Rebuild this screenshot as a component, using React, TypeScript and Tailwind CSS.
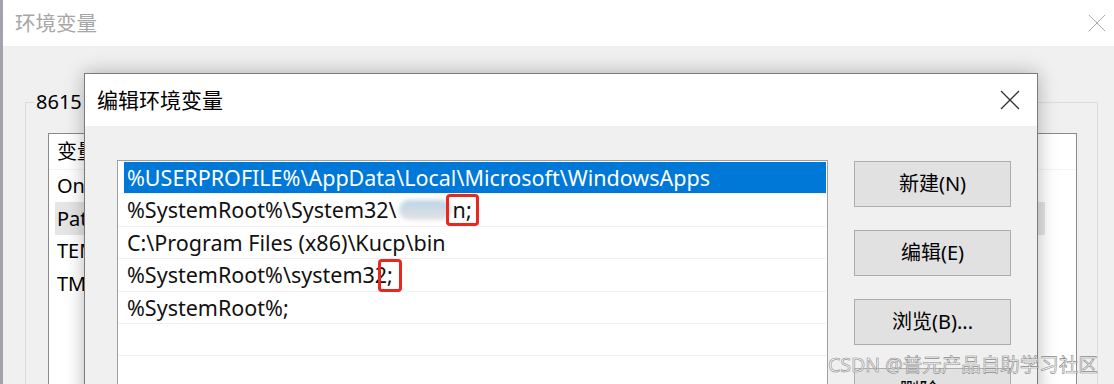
import React from "react";

function CloseX({ size, color, sw }: { size: number; color: string; sw: number }) {
  return (
    <svg width={size} height={size} viewBox="0 0 20 20" fill="none">
      <path d="M1 1 L19 19 M19 1 L1 19" stroke={color} strokeWidth={sw} />
    </svg>
  );
}

export default function App() {
  return (
    <div className="relative w-[1114px] h-[384px] overflow-hidden bg-[#f0f0f0] [font-family:'Noto_Sans','Noto_Sans_CJK_SC',sans-serif] text-black">
      {/* Outer window: 环境变量 */}
      <div className="flex h-full">
        <div className="w-[3px] bg-[#a3a3ad]" />
        <div className="flex-1 flex flex-col">
          <div className="h-[46px] shrink-0 bg-white flex items-center justify-between pl-[12px] pr-[8px]">
            <span className="text-[20.5px] leading-none text-[#a6a6a6]">环境变量</span>
            <CloseX size={18} color="#a8a8a8" sw={1.1} />
          </div>
          <div className="flex-1 flex flex-col pt-[56px] pl-[22px] pr-[16px]">
            <div className="relative flex-1 flex flex-col border-l border-t border-r border-[#dcdcdc] pt-[30px] pl-[22px] pr-[20px]">
              <span className="absolute -top-[14px] left-[8px] bg-[#f0f0f0] px-[2px] text-[20px] leading-[26px]">
                8615
              </span>
              <div className="flex-1 bg-white border-l border-t border-r border-[#8a8a8a] flex flex-col text-[20px] leading-none">
                <div className="h-[36px] shrink-0 flex items-center pl-[8px] border-b border-[#f4f4f4]">
                  <span>变量</span>
                </div>
                <div className="h-[32px] shrink-0 flex items-center pl-[8px]">On</div>
                <div className="h-[33px] shrink-0 flex items-center ml-[6px] pl-[2px] mr-[31px] bg-[#e5e5e5]">Path</div>
                <div className="h-[32px] shrink-0 flex items-center pl-[8px]">TEMP</div>
                <div className="h-[33px] shrink-0 flex items-center pl-[8px]">TMP</div>
              </div>
            </div>
          </div>
        </div>
      </div>

      {/* Front dialog: 编辑环境变量 */}
      <div className="absolute left-[84px] top-[73px] w-[954px] h-[380px] border border-[#7b7b7b] bg-[#f0f0f0] shadow-[0_0_18px_rgba(0,0,0,0.28)] flex flex-col">
        <div className="h-[52px] shrink-0 bg-white flex items-center justify-between pl-[12px] pr-[17px]">
          <span className="text-[21px] leading-none">编辑环境变量</span>
          <CloseX size={20} color="#333333" sw={1.3} />
        </div>
        <div className="flex-1 flex pl-[32px] pt-[34px] gap-[26px]">
          <div className="w-[711px] h-[280px] shrink-0 bg-white border border-[#a0a0a0] pt-[1px] pr-[1px] text-[21.5px] leading-none text-[#111]">
            <div className="h-[32.4px] flex border-b border-[#f0f0f0]">
              <div className="flex-1 ml-[6px] bg-[#0078d7] text-white flex items-center pl-[3px]">
                %USERPROFILE%\AppData\Local\Microsoft\WindowsApps
              </div>
            </div>
            <div className="h-[32.4px] flex items-center pl-[9px] border-b border-[#f0f0f0]">
              <span>%SystemRoot%\System32\</span>
              <span className="inline-block w-[52px] h-[20px] mx-[2px] rounded-full bg-[linear-gradient(180deg,#bcd3e6_0%,#d3dde6_60%,#e2e2e2_100%)] blur-[2px]" />
              <span className="relative">
                n;
                <span className="absolute -left-[7px] -right-[7px] -top-[5px] -bottom-[5px] border-[3px] border-[#e8281e] rounded-[4px]" />
              </span>
            </div>
            <div className="h-[32.4px] flex items-center pl-[9px] border-b border-[#f0f0f0]">
              C:\Program Files (x86)\Kucp\bin
            </div>
            <div className="h-[32.4px] flex items-center pl-[9px] border-b border-[#f0f0f0]">
              <span>%SystemRoot%\system3</span>
              <span className="relative">
                2;
                <span className="absolute left-[3px] -right-[9px] -top-[5px] -bottom-[6px] border-[3px] border-[#e8281e] rounded-[4px]" />
              </span>
            </div>
            <div className="h-[32.4px] flex items-center pl-[9px] border-b border-[#f0f0f0]">
              %SystemRoot%;
            </div>
            <div className="h-[32.4px] border-b border-[#f0f0f0]" />
          </div>
          <div className="flex flex-col gap-[23px] pt-[1px]">
            <div className="w-[157px] h-[46px] shrink-0 border border-[#adadad] bg-[#e1e1e1] flex items-center justify-center text-[20px] leading-none">
              新建(N)
            </div>
            <div className="w-[157px] h-[46px] shrink-0 border border-[#adadad] bg-[#e1e1e1] flex items-center justify-center text-[20px] leading-none">
              编辑(E)
            </div>
            <div className="w-[157px] h-[46px] shrink-0 border border-[#adadad] bg-[#e1e1e1] flex items-center justify-center text-[20px] leading-none">
              浏览(B)...
            </div>
            <div className="w-[157px] h-[46px] shrink-0 border border-[#adadad] bg-[#e1e1e1] flex items-center justify-center text-[20px] leading-none">
              删除(D)
            </div>
          </div>
        </div>
      </div>

      {/* Watermark */}
      <div className="absolute left-[828px] top-[351px] text-[19.5px] leading-[28px] whitespace-nowrap text-white/70 [-webkit-text-stroke:0.6px_#8c8c8c]">
        CSDN @普元产品自助学习社区
      </div>
    </div>
  );
}
